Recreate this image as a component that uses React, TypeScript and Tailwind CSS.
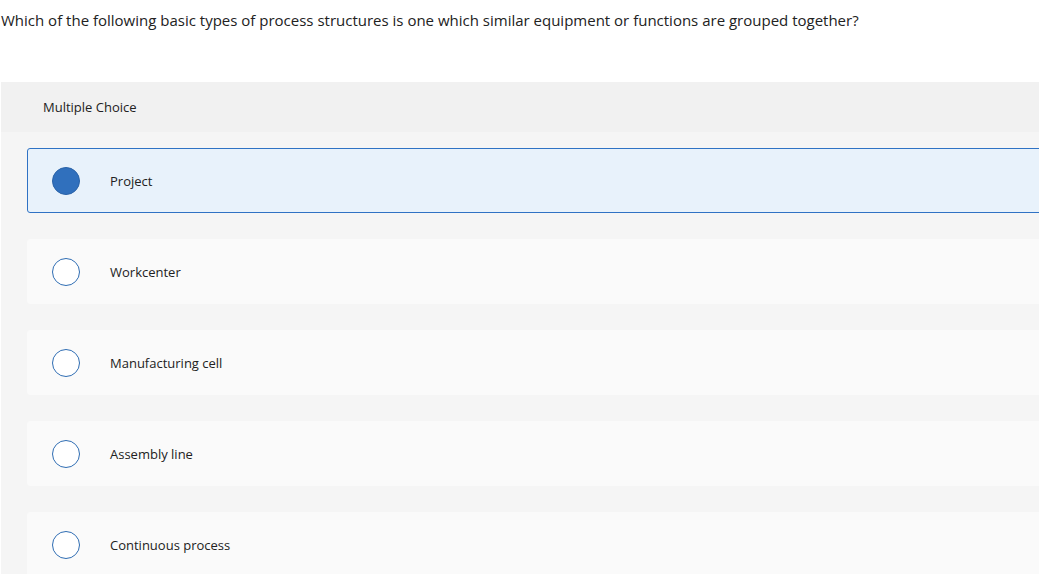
import React from "react";

const options = [
  "Project",
  "Workcenter",
  "Manufacturing cell",
  "Assembly line",
  "Continuous process",
];

const Radio = ({ checked }: { checked: boolean }) =>
  checked ? (
    <span className="block h-[28px] w-[28px] shrink-0 rounded-full border border-[#2a63a8] bg-[#3070bd]" />
  ) : (
    <span className="block h-[28px] w-[28px] shrink-0 rounded-full border border-[#2f6db3] bg-white" />
  );

export default function App() {
  const selected = 0;
  return (
    <div
      className="h-[574px] w-full overflow-hidden bg-white text-[#222]"
      style={{ fontFamily: "'Open Sans', Arial, sans-serif" }}
    >
      <p className="pl-[1px] pt-[10px] text-[15px] leading-[20px]">
        Which of the following basic types of process structures is one which similar equipment or functions are
        grouped together?
      </p>
      <div className="ml-[1px] mt-[52px] bg-[#f5f5f5]">
        <div className="flex h-[50px] items-center bg-[#f1f1f1] pl-[42px] pt-[2px] text-[13px]">Multiple Choice</div>
        <div className="flex flex-col gap-[26px] pl-[26px] pt-[16px]">
          {options.map((label, i) => (
            <div
              key={label}
              className={
                i === selected
                  ? "-mr-4 flex h-[65px] items-center rounded-[3px] border border-[#2f72c4] bg-[#e8f2fb] pl-[24px]"
                  : "-mr-4 flex h-[65px] items-center rounded-[3px] border border-[#fafafa] bg-[#fafafa] pl-[24px]"
              }
            >
              <Radio checked={i === selected} />
              <span className="ml-[30px] pt-[2px] text-[13px]">{label}</span>
            </div>
          ))}
        </div>
      </div>
    </div>
  );
}
